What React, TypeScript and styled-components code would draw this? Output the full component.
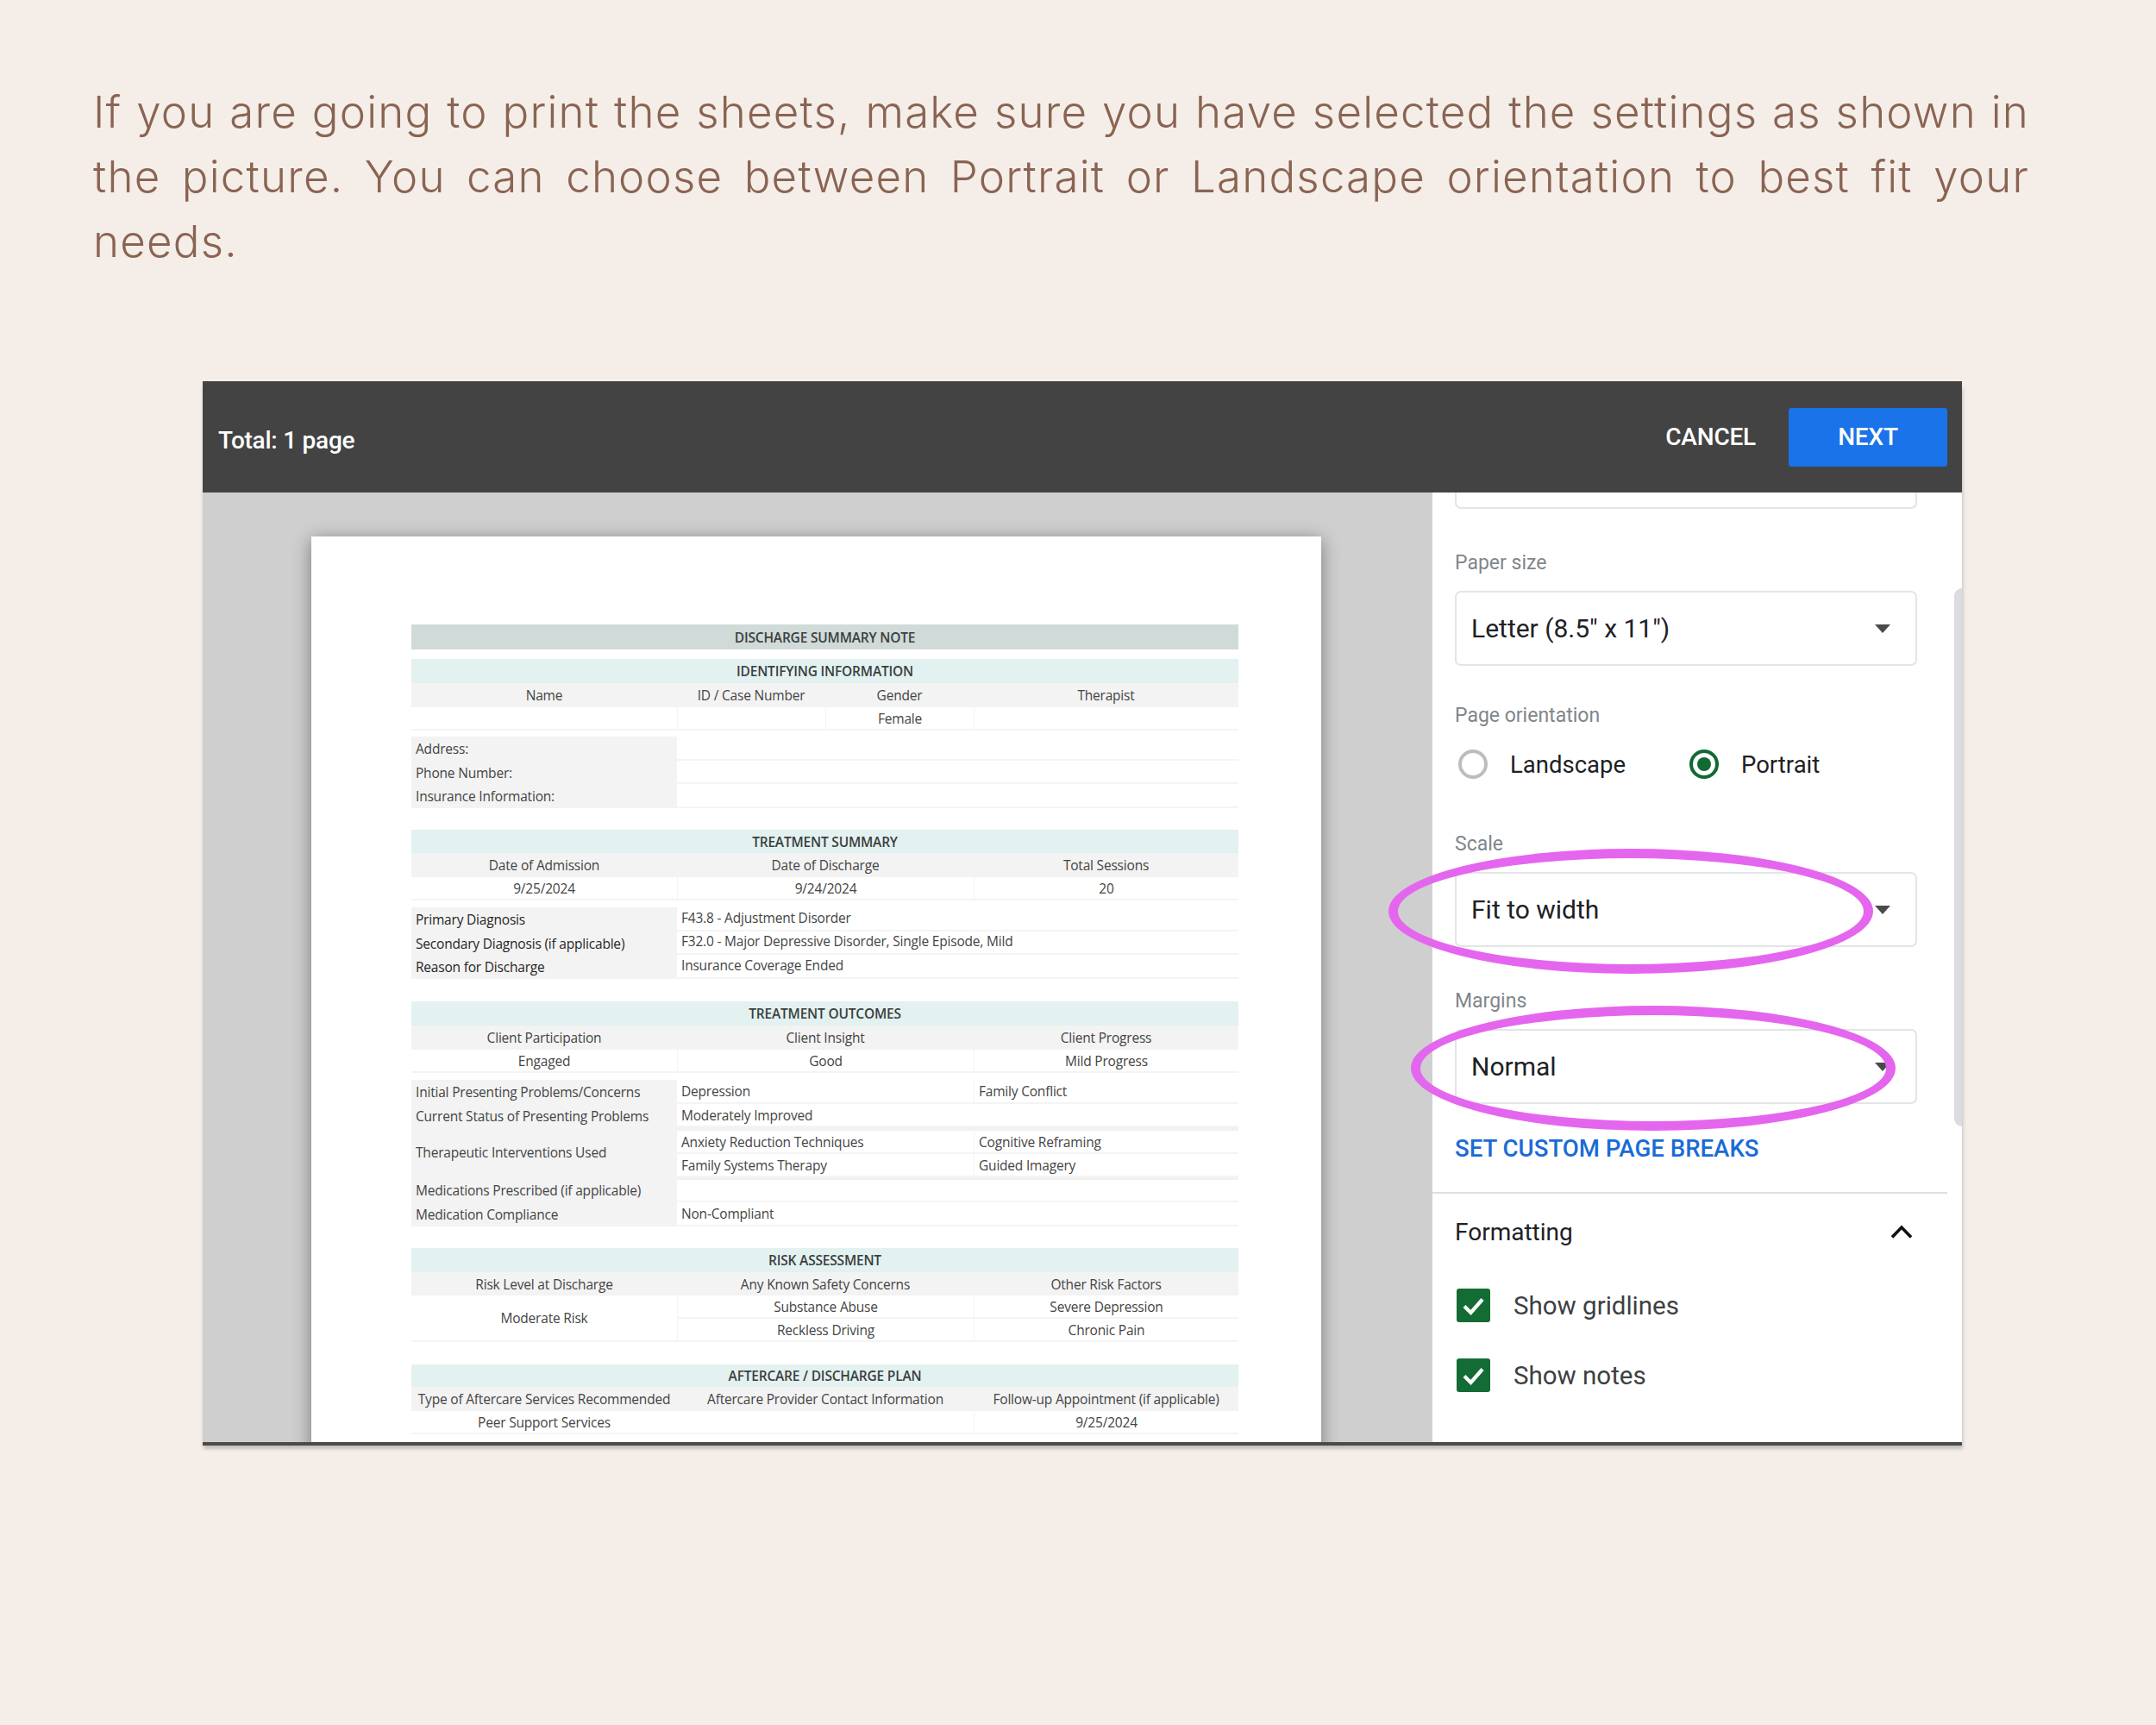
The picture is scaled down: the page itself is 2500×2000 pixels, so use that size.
import React from "react";
import styled, { createGlobalStyle } from "styled-components";

const Global = createGlobalStyle`
  html, body { margin: 0; padding: 0; background: #f5eee8; }
  * { box-sizing: border-box; }
`;

const Page = styled.div`
  width: 2500px;
  height: 2000px;
  padding: 92px 147px 0 108px;
  background: #f5eee8;
  overflow: hidden;
`;

const Intro = styled.p`
  margin: 0;
  width: 2245px;
  font: 300 51px/75px Inter, "Liberation Sans", sans-serif;
  letter-spacing: 1.2px;
  word-spacing: -3px;
  color: #8a6453;
  text-align: justify;
`;

const Window = styled.div`
  position: relative;
  width: 2040px;
  height: 1230px;
  margin: 125px 0 0 127px;
  display: flex;
  flex-direction: column;
  overflow: visible;
  box-shadow: 0 4px 0 #4a4a4a, 1px 8px 4px rgba(0, 0, 0, 0.2);
  font-family: Roboto, "Liberation Sans", sans-serif;
`;

const Bar = styled.header`
  flex: 0 0 129px;
  display: flex;
  align-items: center;
  padding: 0 17px 0 18px;
  background: #434343;
  color: #fff;
`;

const Total = styled.div`
  flex: 1;
  padding-top: 8px;
  font-size: 28px;
  font-weight: 500;
  letter-spacing: -0.25px;
`;

const Cancel = styled.div`
  font-size: 28px;
  font-weight: 500;
  letter-spacing: -0.2px;
  margin-right: 38px;
`;

const Next = styled.div`
  width: 184px;
  height: 68px;
  border-radius: 3px;
  background: #1a73e8;
  display: flex;
  align-items: center;
  justify-content: center;
  font-size: 28px;
  font-weight: 500;
  letter-spacing: -0.2px;
`;

const Body = styled.div`
  flex: 1;
  min-height: 0;
  display: flex;
`;

const Preview = styled.div`
  flex: 0 0 1426px;
  background: #cfcfcf;
  padding: 51px 0 0 126px;
  overflow: hidden;
`;

const Sheet = styled.div`
  width: 1171px;
  height: 1100px;
  background: #fff;
  padding: 102px 0 0 116px;
  box-shadow: 0 4px 20px rgba(0, 0, 0, 0.42);
`;

const Block = styled.div<{ $rows: string; $gap?: number }>`
  width: 959px;
  margin-top: ${(p) => p.$gap ?? 0}px;
  display: grid;
  grid-template-columns: 308px 172px 172px 307px;
  grid-template-rows: ${(p) => p.$rows};
  font: 400 15.5px "Open Sans", "Liberation Sans", sans-serif;
  letter-spacing: -0.2px;
  color: #444;
`;

const Cell = styled.div<{
  $span?: number;
  $rowSpan?: number;
  $tone?: "title" | "section" | "head" | "label" | "value" | "strong";
  $left?: boolean;
  $rule?: number;
  $lift?: number;
  $plain?: boolean;
}>`
  grid-column-end: span ${(p) => p.$span ?? 1};
  grid-row-end: span ${(p) => p.$rowSpan ?? 1};
  display: flex;
  align-items: center;
  justify-content: ${(p) => (p.$left ? "flex-start" : "center")};
  padding: 0 ${(p) => (p.$left ? 5 : 0)}px ${(p) => p.$lift ?? 0}px ${(p) => (p.$left ? 5 : 0)}px;
  white-space: nowrap;
  background: ${(p) =>
    p.$tone === "title"
      ? "#d0dad8"
      : p.$tone === "section"
      ? "#e3f1f0"
      : p.$tone === "head" || p.$tone === "label" || p.$tone === "strong"
      ? "#f3f3f3"
      : "#fff"};
  font-weight: ${(p) => (p.$tone === "title" || p.$tone === "section" ? 600 : 400)};
  color: ${(p) =>
    p.$tone === "title" || p.$tone === "section" ? "#3a3f3f" : p.$tone === "strong" ? "#262626" : "#444"};
  ${(p) =>
    !p.$tone || p.$tone === "value"
      ? `border-left: ${p.$plain ? 0 : 1}px solid #f4f4f4; border-bottom: 2px solid #f4f4f4;`
      : ""}
  ${(p) => (p.$rule ? `border-top: ${p.$rule}px solid #f1f1f1;` : "")}
`;

const Panel = styled.div`
  flex: 1;
  position: relative;
  background: #fff;
  overflow: hidden;
`;

const Fields = styled.div`
  padding: 0 52px 0 26px;
`;

const Select = styled.div<{ $gap?: number }>`
  height: 87px;
  margin-top: ${(p) => p.$gap ?? 0}px;
  padding: 0 29px 0 17px;
  display: flex;
  align-items: center;
  justify-content: space-between;
  border: 2px solid #e3e4e6;
  border-radius: 7px;
  font-size: 30px;
  color: #202124;
`;

const Caret = styled.span`
  width: 0;
  height: 0;
  border-left: 9px solid transparent;
  border-right: 9px solid transparent;
  border-top: 10px solid #4a4a4a;
`;

const Label = styled.div<{ $gap: number }>`
  margin-top: ${(p) => p.$gap}px;
  margin-bottom: 17px;
  font-size: 23px;
  line-height: 30px;
  color: #80868b;
`;

const Radios = styled.div`
  margin-top: 21px;
  height: 40px;
  display: flex;
  align-items: center;
  padding-left: 4px;
`;

const RadioOption = styled.div<{ $width?: number }>`
  display: flex;
  align-items: center;
  gap: 26px;
  width: ${(p) => (p.$width ? `${p.$width}px` : "auto")};
  font-size: 27.5px;
  color: #202124;
`;

const Radio = styled.span<{ $on?: boolean }>`
  width: 34px;
  height: 34px;
  border-radius: 50%;
  border: 4px solid ${(p) => (p.$on ? "#0f6b32" : "#bdbdbd")};
  display: flex;
  align-items: center;
  justify-content: center;
  &::after {
    content: "";
    width: 16px;
    height: 16px;
    border-radius: 50%;
    background: ${(p) => (p.$on ? "#0f6b32" : "transparent")};
  }
`;

const Link = styled.div`
  margin-top: 32px;
  font-size: 27.6px;
  line-height: 40px;
  font-weight: 500;
  color: #1a6bd6;
`;

const Divider = styled.hr`
  margin: 30px 17px 0 0;
  border: 0;
  height: 2px;
  background: #dfe0e2;
`;

const Formatting = styled.div`
  margin-top: 24px;
  padding: 0 0 0 26px;
`;

const FormatHead = styled.div`
  display: flex;
  align-items: center;
  justify-content: space-between;
  padding-right: 57px;
  height: 40px;
  font-size: 28px;
  color: #202124;
`;

const CheckRow = styled.div<{ $gap: number }>`
  margin-top: ${(p) => p.$gap}px;
  height: 39px;
  padding-left: 2px;
  display: flex;
  align-items: center;
  gap: 27px;
  font-size: 29.5px;
  color: #3c4043;
`;

const Box = styled.span`
  width: 39px;
  height: 39px;
  border-radius: 3px;
  background: #146c35;
  display: flex;
  align-items: center;
  justify-content: center;
`;

const Scrollbar = styled.div`
  position: absolute;
  top: 111px;
  right: 0;
  width: 9px;
  height: 624px;
  border-radius: 9px 0 0 9px;
  background: #dadce0;
`;

const Ring = styled.div<{ $x: number; $y: number }>`
  position: absolute;
  left: ${(p) => p.$x}px;
  top: ${(p) => p.$y}px;
  width: 562px;
  height: 145px;
  border: 11px solid #e566ee;
  border-radius: 50%;
  pointer-events: none;
`;

const Tick = () => (
  <svg width="27" height="27" viewBox="0 0 27 27" fill="none">
    <path d="M3 14.5 L10.5 22 L24 6.5" stroke="#fff" strokeWidth="4.2" />
  </svg>
);

export default function App() {
  return (
    <Page>
      <Global />
      <Intro>
        If you are going to print the sheets, make sure you have selected the settings as shown in the picture. You can
        choose between Portrait or Landscape orientation to best fit your needs.
      </Intro>
      <Window>
        <Bar>
          <Total>Total: 1 page</Total>
          <Cancel>CANCEL</Cancel>
          <Next>NEXT</Next>
        </Bar>
        <Body>
          <Preview>
            <Sheet>
              <Block $rows="29px">
                <Cell $span={4} $tone="title">DISCHARGE SUMMARY NOTE</Cell>
              </Block>
              <Block $gap={11} $rows="28px 28px 27px">
                <Cell $span={4} $tone="section">IDENTIFYING INFORMATION</Cell>
                <Cell $tone="head">Name</Cell>
                <Cell $tone="head">ID / Case Number</Cell>
                <Cell $tone="head">Gender</Cell>
                <Cell $tone="head">Therapist</Cell>
                <Cell $plain />
                <Cell />
                <Cell>Female</Cell>
                <Cell />
              </Block>
              <Block $gap={7} $rows="28px 27px 28px">
                <Cell $tone="label" $left>Address:</Cell>
                <Cell $span={3} $left $plain />
                <Cell $tone="label" $left>Phone Number:</Cell>
                <Cell $span={3} $left $plain />
                <Cell $tone="label" $left>Insurance Information:</Cell>
                <Cell $span={3} $left $plain />
              </Block>
              <Block $gap={25} $rows="27px 28px 27px">
                <Cell $span={4} $tone="section">TREATMENT SUMMARY</Cell>
                <Cell $tone="head">Date of Admission</Cell>
                <Cell $tone="head" $span={2}>Date of Discharge</Cell>
                <Cell $tone="head">Total Sessions</Cell>
                <Cell $plain>9/25/2024</Cell>
                <Cell $span={2}>9/24/2024</Cell>
                <Cell>20</Cell>
              </Block>
              <Block $gap={8} $rows="28px 27px 28px">
                <Cell $tone="strong" $left>Primary Diagnosis</Cell>
                <Cell $span={3} $left $lift={3} $plain>F43.8 - Adjustment Disorder</Cell>
                <Cell $tone="strong" $left>Secondary Diagnosis (if applicable)</Cell>
                <Cell $span={3} $left $lift={3} $plain>F32.0 - Major Depressive Disorder, Single Episode, Mild</Cell>
                <Cell $tone="strong" $left>Reason for Discharge</Cell>
                <Cell $span={3} $left $lift={3} $plain>Insurance Coverage Ended</Cell>
              </Block>
              <Block $gap={26} $rows="28px 28px 27px">
                <Cell $span={4} $tone="section">TREATMENT OUTCOMES</Cell>
                <Cell $tone="head">Client Participation</Cell>
                <Cell $tone="head" $span={2}>Client Insight</Cell>
                <Cell $tone="head">Client Progress</Cell>
                <Cell $plain>Engaged</Cell>
                <Cell $span={2}>Good</Cell>
                <Cell>Mild Progress</Cell>
              </Block>
              <Block $gap={8} $rows="28px 27px 31px 27px 29px 28px">
                <Cell $tone="label" $left>Initial Presenting Problems/Concerns</Cell>
                <Cell $span={2} $left $plain>Depression</Cell>
                <Cell $left>Family Conflict</Cell>
                <Cell $tone="label" $left>Current Status of Presenting Problems</Cell>
                <Cell $span={3} $left $plain>Moderately Improved</Cell>
                <Cell $tone="label" $left $rowSpan={2}>Therapeutic Interventions Used</Cell>
                <Cell $span={2} $left $rule={4} $plain>Anxiety Reduction Techniques</Cell>
                <Cell $left $rule={4}>Cognitive Reframing</Cell>
                <Cell $span={2} $left $plain>Family Systems Therapy</Cell>
                <Cell $left>Guided Imagery</Cell>
                <Cell $tone="label" $left>Medications Prescribed (if applicable)</Cell>
                <Cell $span={3} $left $rule={3} $plain />
                <Cell $tone="label" $left>Medication Compliance</Cell>
                <Cell $span={3} $left $plain>Non-Compliant</Cell>
              </Block>
              <Block $gap={25} $rows="28px 27px 27px 27px">
                <Cell $span={4} $tone="section">RISK ASSESSMENT</Cell>
                <Cell $tone="head">Risk Level at Discharge</Cell>
                <Cell $tone="head" $span={2}>Any Known Safety Concerns</Cell>
                <Cell $tone="head">Other Risk Factors</Cell>
                <Cell $rowSpan={2} $plain>Moderate Risk</Cell>
                <Cell $span={2}>Substance Abuse</Cell>
                <Cell>Severe Depression</Cell>
                <Cell $span={2}>Reckless Driving</Cell>
                <Cell>Chronic Pain</Cell>
              </Block>
              <Block $gap={26} $rows="26px 28px 27px">
                <Cell $span={4} $tone="section">AFTERCARE / DISCHARGE PLAN</Cell>
                <Cell $tone="head">Type of Aftercare Services Recommended</Cell>
                <Cell $tone="head" $span={2}>Aftercare Provider Contact Information</Cell>
                <Cell $tone="head">Follow-up Appointment (if applicable)</Cell>
                <Cell $plain>Peer Support Services</Cell>
                <Cell $span={2} $plain />
                <Cell>9/25/2024</Cell>
              </Block>
            </Sheet>
          </Preview>
          <Panel>
            <Fields>
              <Select $gap={-68} />
              <Label $gap={48}>Paper size</Label>
              <Select>
                Letter (8.5" x 11")
                <Caret />
              </Select>
              <Label $gap={43}>Page orientation</Label>
              <Radios>
                <RadioOption $width={268}>
                  <Radio />
                  Landscape
                </RadioOption>
                <RadioOption>
                  <Radio $on />
                  Portrait
                </RadioOption>
              </Radios>
              <Label $gap={58}>Scale</Label>
              <Select>
                Fit to width
                <Caret />
              </Select>
              <Label $gap={48}>Margins</Label>
              <Select>
                Normal
                <Caret />
              </Select>
              <Link>SET CUSTOM PAGE BREAKS</Link>
            </Fields>
            <Divider />
            <Formatting>
              <FormatHead>
                Formatting
                <svg width="26" height="18" viewBox="0 0 26 18" fill="none">
                  <path d="M2 15.5 L13 4 L24 15.5" stroke="#111" strokeWidth="3.6" />
                </svg>
              </FormatHead>
              <CheckRow $gap={46}>
                <Box><Tick /></Box>
                Show gridlines
              </CheckRow>
              <CheckRow $gap={42}>
                <Box><Tick /></Box>
                Show notes
              </CheckRow>
            </Formatting>
            <Scrollbar />
          </Panel>
        </Body>
        <Ring $x={1375} $y={542} />
        <Ring $x={1401} $y={724} />
      </Window>
    </Page>
  );
}
